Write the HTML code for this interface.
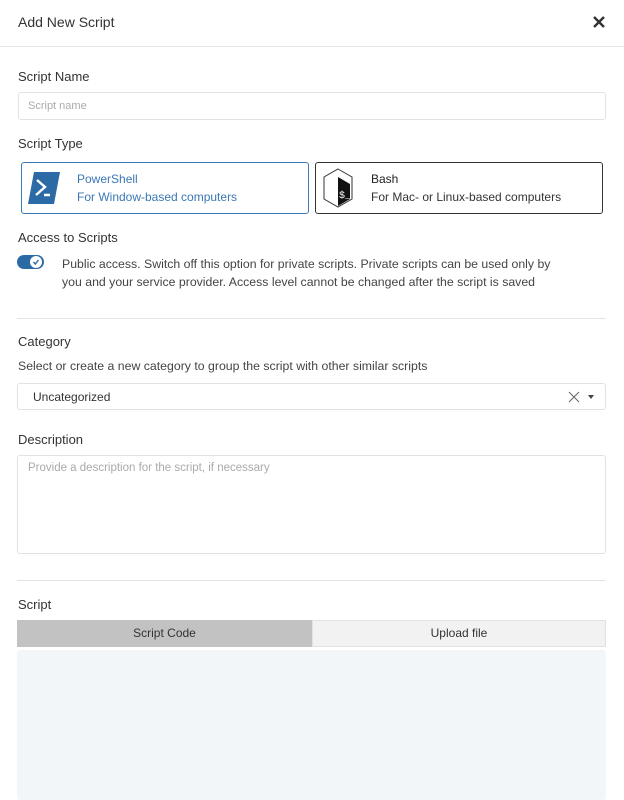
<!DOCTYPE html><html><head><style>
*{margin:0;padding:0;box-sizing:border-box}
body{width:624px;height:795px;background:#fff;font-family:"Liberation Sans",sans-serif;color:#333;position:relative;overflow:hidden}
.a{position:absolute}
.lbl{font-size:13px;color:#333}
.hr{position:absolute;left:17px;right:18px;height:1px;background:#e3e3e3}
.inp{position:absolute;border:1px solid #e2e2e2;border-radius:3px;background:#fff}
.card{position:absolute;border-radius:3px;height:52px}
</style></head><body>
<div class="a" style="left:18px;top:14px;font-size:14px;color:#333">Add New Script</div>
<svg class="a" style="left:592px;top:15px" width="14" height="14" viewBox="0 0 14 14"><path d="M2 2L12 12M12 2L2 12" stroke="#333" stroke-width="2.4"/></svg>
<div class="a" style="left:0;right:0;top:46px;height:1px;background:#e3e3e3"></div>

<div class="a lbl" style="left:18px;top:69px">Script Name</div>
<div class="inp" style="left:18px;top:92px;width:588px;height:28px"><span class="a" style="left:9px;top:7px;font-size:11px;color:#aaa">Script name</span></div>

<div class="a lbl" style="left:18px;top:136px">Script Type</div>
<div class="card" style="left:21px;top:162px;width:288px;border:1px solid #3b7ab8">
<svg class="a" style="left:5px;top:7px" width="34" height="36" viewBox="0 0 34 36"><path d="M7 2H33L27 34H1Z" fill="#2c6aa6"/><path d="M10 10L18 17L9 25M17 25H23" stroke="#fff" stroke-width="2.4" fill="none"/></svg>
<div class="a" style="left:55px;top:9px;font-size:12px;color:#3a78b5">PowerShell</div>
<div class="a" style="left:55px;top:27px;font-size:12px;color:#3a78b5">For Window-based computers</div></div>
<div class="card" style="left:315px;top:162px;width:288px;border:1px solid #333">
<svg class="a" style="left:7px;top:5px" width="30" height="40" viewBox="0 0 30 40"><path d="M15 1L29 9V31L15 39L1 31V9Z" fill="#fff" stroke="#333"/><path d="M15 9L27 16V31L15 38Z" fill="#111"/><text x="16" y="30" font-size="10" fill="#fff" font-family="Liberation Mono">$_</text></svg>
<div class="a" style="left:55px;top:9px;font-size:12px;color:#222">Bash</div>
<div class="a" style="left:55px;top:27px;font-size:12px;color:#333">For Mac- or Linux-based computers</div></div>

<div class="a lbl" style="left:18px;top:230px">Access to Scripts</div>
<div class="a" style="left:17px;top:255px;width:27px;height:14px;border-radius:7px;background:#2c6aa6"></div>
<div class="a" style="left:30px;top:256px;width:12px;height:12px;border-radius:6px;background:#fff"></div>
<svg class="a" style="left:31px;top:257px" width="10" height="10" viewBox="0 0 10 10"><path d="M2.5 5L4.3 7L7.5 3" stroke="#2c6aa6" stroke-width="1.4" fill="none"/></svg>
<div class="a" style="left:62px;top:255px;font-size:12.3px;line-height:18px;color:#444;width:540px">Public access. Switch off this option for private scripts. Private scripts can be used only by<br>you and your service provider. Access level cannot be changed after the script is saved</div>

<div class="hr" style="top:318px"></div>
<div class="a lbl" style="left:18px;top:334px">Category</div>
<div class="a" style="left:18px;top:359px;font-size:12.3px;color:#444">Select or create a new category to group the script with other similar scripts</div>
<div class="inp" style="left:17px;top:383px;width:589px;height:27px"><span class="a" style="left:15px;top:6px;font-size:12px;color:#333">Uncategorized</span>
<svg class="a" style="left:550px;top:7px" width="12" height="12" viewBox="0 0 12 12"><path d="M1 1L11 11M11 1L1 11" stroke="#666" stroke-width="1"/></svg>
<div class="a" style="left:570px;top:11px;border-left:3.5px solid transparent;border-right:3.5px solid transparent;border-top:4px solid #444"></div></div>

<div class="a lbl" style="left:18px;top:432px">Description</div>
<div class="inp" style="left:17px;top:455px;width:589px;height:99px"><span class="a" style="left:10px;top:6px;font-size:11.5px;color:#aaa">Provide a description for the script, if necessary</span></div>

<div class="hr" style="top:580px"></div>
<div class="a lbl" style="left:18px;top:597px">Script</div>
<div class="a" style="left:17px;top:620px;width:295px;height:27px;background:#c2c2c2;font-size:12px;text-align:center;line-height:27px;color:#333">Script Code</div>
<div class="a" style="left:312px;top:620px;width:294px;height:27px;background:#f2f2f2;border:1px solid #e2e2e2;font-size:12px;text-align:center;line-height:25px;color:#333">Upload file</div>
<div class="a" style="left:17px;top:650px;width:589px;height:150px;background:#f3f6f9;border-radius:3px"></div>
</body></html>
